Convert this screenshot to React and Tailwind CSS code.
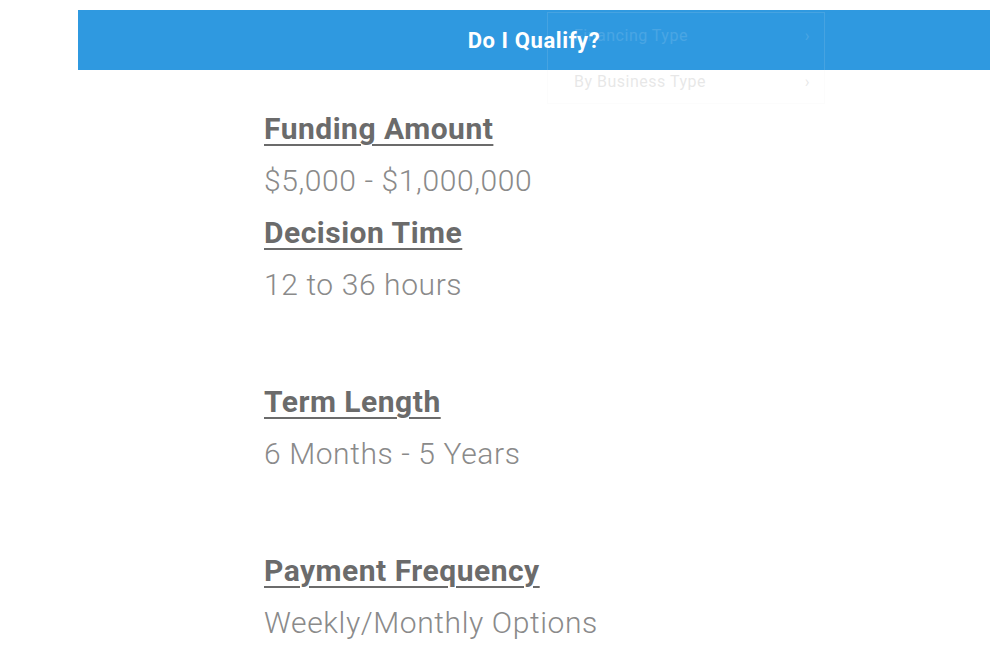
import React from 'react'

const ROWS = [
  { title: 'Funding Amount', value: '$5,000 - $1,000,000', gap: false },
  { title: 'Decision Time', value: '12 to 36 hours', gap: false },
  { title: 'Term Length', value: '6 Months - 5 Years', gap: true },
  { title: 'Payment Frequency', value: 'Weekly/Monthly Options', gap: true },
]

export default function App() {
  return (
    <div className="w-[1000px] h-[670px] bg-white overflow-hidden font-['Roboto',sans-serif]">
      <div className="relative pt-[10px] pl-[78px] pr-[10px]">
        {/* CTA bar */}
        <div className="h-[60px] bg-[#2f99e0] flex items-center justify-center">
          <span className="relative z-10 text-white font-bold text-[22px] tracking-[0.6px]">Do I Qualify?</span>
        </div>

        {/* faint dropdown ghost behind */}
        <div className="absolute left-[547px] top-[12px] w-[278px] h-[92px] border border-[#ececec] opacity-[0.12] text-[16px] tracking-[0.5px]">
          <div className="h-[46px] flex items-center justify-between pl-[26px] pr-[14px] text-white">
            <span>Financing Type</span>
            <span>›</span>
          </div>
          <div className="h-[46px] flex items-center justify-between pl-[26px] pr-[14px] text-[#444]">
            <span>By Business Type</span>
            <span>›</span>
          </div>
        </div>
      </div>

      {/* details */}
      <div className="pl-[264px] pt-[33px]">
        {ROWS.map(({ title, value, gap }) => (
          <div key={title} className={gap ? 'mt-[65px]' : ''}>
            <h3 className="text-[30px] leading-[52px] font-bold text-[#6b6b6b] underline underline-offset-[5px] decoration-[2px] tracking-[0.5px]">
              {title}
            </h3>
            <p className="text-[30px] leading-[52px] font-light text-[#8a8a8a] tracking-[0.6px]">{value}</p>
          </div>
        ))}
      </div>
    </div>
  )
}
